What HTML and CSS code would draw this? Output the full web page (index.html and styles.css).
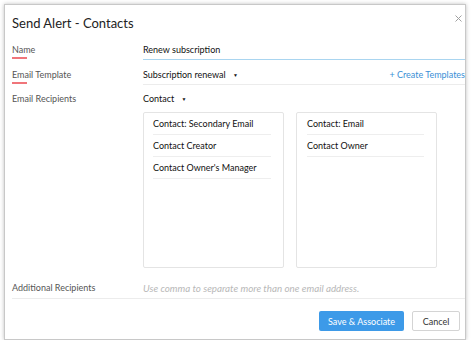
FILE: index.html
```html
<!DOCTYPE html>
<html lang="en">
<head>
  <meta charset="UTF-8" />
  <title>Send Alert - Contacts</title>
  <link rel="stylesheet" href="styles.css">
</head>
<body>
  <div class="dialog">
    <div class="dialog-head">
      <h1>Send Alert - Contacts</h1>
      <svg class="close" width="7" height="7" viewBox="0 0 7 7">
        <path d="M0.5 0.5 L6.5 6.5 M6.5 0.5 L0.5 6.5" stroke="#a0a0a0" stroke-width="1" fill="none"/>
      </svg>
    </div>

    <div class="row row-name">
      <div class="label mandatory">Name</div>
      <div class="field field-input">Renew subscription</div>
    </div>

    <div class="row row-template">
      <div class="label mandatory">Email Template</div>
      <div class="field field-select">
        <span>Subscription renewal <i class="caret">▼</i></span>
        <a href="#" class="create-link">+ Create Templates</a>
      </div>
    </div>

    <div class="row row-recipients">
      <div class="label">Email Recipients</div>
      <div class="field">Contact <i class="caret">▼</i></div>
    </div>

    <div class="lists">
      <ul class="pick-list left">
        <li>Contact: Secondary Email</li>
        <li>Contact Creator</li>
        <li>Contact Owner's Manager</li>
      </ul>
      <ul class="pick-list right">
        <li>Contact: Email</li>
        <li>Contact Owner</li>
      </ul>
    </div>

    <div class="row row-additional">
      <div class="label">Additional Recipients</div>
      <div class="field placeholder">Use comma to separate more than one email address.</div>
    </div>

    <div class="dialog-foot">
      <button class="btn btn-primary">Save &amp; Associate</button>
      <button class="btn btn-default">Cancel</button>
    </div>
  </div>
</body>
</html>
```

FILE: styles.css
```css
body {
  margin: 0;
  background: #fff;
  font-family: Lato, "Open Sans", Arial, sans-serif;
  color: #333;
}

.dialog {
  box-sizing: border-box;
  width: 462px;
  height: 336px;
  margin: 4px 0 0 4px;
  padding: 0 0 0 7px;
  border: 1px solid #c8c8c8;
  background: #fff;
  box-shadow: 0 0 4px rgba(0, 0, 0, 0.25);
  display: flex;
  flex-direction: column;
}

.dialog-head {
  height: 33px;
  display: flex;
  justify-content: space-between;
  align-items: flex-start;
}

.dialog-head h1 {
  margin: 10px 0 0;
  font-size: 13px;
  font-weight: 400;
  color: #222;
}

.close {
  margin-top: 10px;
  margin-right: 3px;
}

.row {
  display: flex;
  font-size: 9px;
  white-space: nowrap;
}

.label {
  width: 131px;
  flex-shrink: 0;
  color: #555;
}

.mandatory::after {
  content: "";
  display: block;
  width: 15px;
  height: 2px;
  background: #f0757a;
  margin-top: 2px;
}

.field {
  flex: 1;
  color: #111;
}

.caret {
  font-style: normal;
  font-size: 5px;
  margin-left: 5px;
  vertical-align: 1px;
}

.row-name {
  height: 22px;
  align-items: flex-start;
}

.row-name .label {
  padding-top: 6px;
}

.row-name .field {
  box-sizing: border-box;
  height: 22px;
  padding-top: 6px;
  border-bottom: 1px solid #a9d5f0;
}

.row-template {
  height: 24px;
  margin-top: 1px;
}

.row-template .label {
  padding-top: 8px;
}

.row-template .field {
  box-sizing: border-box;
  height: 24px;
  padding-top: 8px;
  border-bottom: 1px solid #ececec;
  display: flex;
  justify-content: space-between;
}

.create-link {
  color: #3a8fd6;
  text-decoration: none;
}

.row-recipients {
  height: 27px;
  align-items: center;
}

.lists {
  display: flex;
  gap: 12px;
  margin-left: 131px;
}

.pick-list {
  box-sizing: border-box;
  height: 156px;
  margin: 0;
  padding: 0 12px 0 9px;
  list-style: none;
  border: 1px solid #e4e4e4;
  border-radius: 2px;
  font-size: 9px;
  color: #111;
}

.pick-list.left {
  width: 141px;
}

.pick-list.right {
  width: 141px;
  padding-left: 10px;
}

.pick-list li {
  height: 21px;
  line-height: 21px;
  border-bottom: 1px solid #eeeeee;
}

.row-additional {
  margin-top: 9px;
  height: 21px;
  align-items: center;
  border-bottom: 1px solid #ececec;
}

.placeholder {
  color: #b8b8b8;
  font-style: italic;
  font-size: 9.8px;
}

.dialog-foot {
  display: flex;
  justify-content: flex-end;
  gap: 8px;
  padding: 12px 5px 0 0;
}

.btn {
  box-sizing: border-box;
  height: 20px;
  padding: 0;
  font-family: inherit;
  font-size: 9px;
  border-radius: 2px;
  cursor: pointer;
}

.btn-primary {
  width: 85px;
  background: #3d9ae8;
  border: none;
  color: #fff;
}

.btn-default {
  width: 48px;
  background: #fff;
  border: 1px solid #d4d4d4;
  color: #333;
}
```
